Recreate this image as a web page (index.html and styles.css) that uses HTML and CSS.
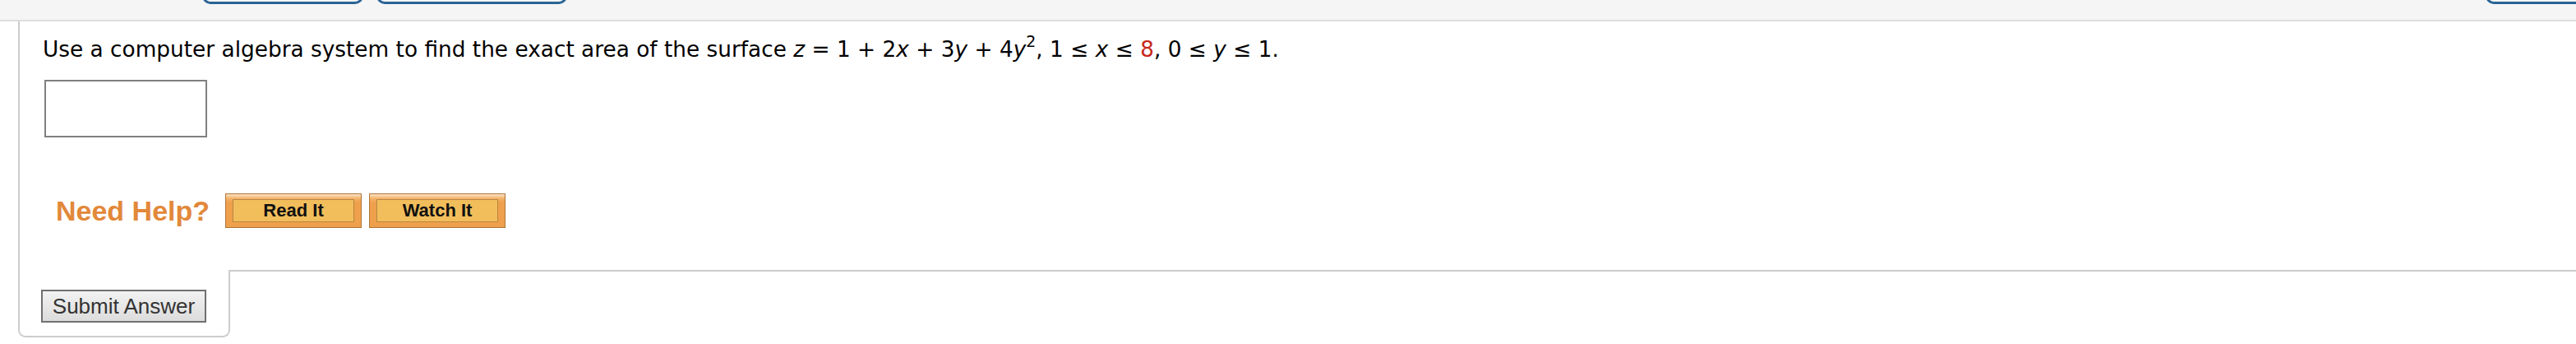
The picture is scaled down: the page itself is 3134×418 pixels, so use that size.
FILE: index.html
```html
<!DOCTYPE html>
<html lang="en">
<head>
<meta charset="utf-8">
<title>Question</title>
<link rel="stylesheet" href="styles.css">
</head>
<body>
<header class="topbar">
  <span class="tb-btn tb-btn-1"></span>
  <span class="tb-btn tb-btn-2"></span>
  <span class="tb-btn tb-btn-3"></span>
</header>
<div class="question">
  <p class="prompt">Use a computer algebra system to find the exact area of the surface <i>z</i> = 1 + 2<i>x</i> + 3<i>y</i> + 4<i>y</i><sup>2</sup>, 1 ≤ <i>x</i> ≤ <span class="red">8</span>, 0 ≤ <i>y</i> ≤ 1.</p>
  <div class="answer"><input class="answer-box" type="text" aria-label="answer"></div>
  <div class="help">
    <span class="need-help">Need Help?</span>
    <button class="help-btn" type="button"><span class="help-inner">Read It</span></button>
    <button class="help-btn" type="button"><span class="help-inner">Watch It</span></button>
  </div>
</div>
<div class="submit-tab">
  <button class="submit" type="button">Submit Answer</button>
</div>
</body>
</html>
```
FILE: styles.css
```css
html, body {
  margin: 0;
  padding: 0;
  background: #ffffff;
}

body {
  font-family: "DejaVu Sans", Verdana, sans-serif;
  color: #000;
}

.topbar {
  height: 24px;
  background: #f5f5f5;
  border-bottom: 2px solid #dddddd;
  display: flex;
  align-items: flex-start;
  overflow: hidden;
}

.tb-btn {
  display: block;
  box-sizing: border-box;
  height: 30px;
  margin-top: -25px;
  border: 3px solid #2a6496;
  border-radius: 10px;
  background: #f5f5f5;
}

.tb-btn-1 {
  margin-left: 246px;
  width: 196px;
}

.tb-btn-2 {
  margin-left: 16px;
  width: 232px;
}

.tb-btn-3 {
  margin-left: auto;
  width: 140px;
  margin-right: -30px;
}

.question {
  margin-left: 22px;
  border-left: 2px solid #cccccc;
  border-bottom: 2px solid #cccccc;
  padding: 16px 0 51px 28px;
}

.prompt {
  margin: 0;
  font-size: 26.35px;
  line-height: 36px;
  white-space: nowrap;
}

.prompt sup {
  font-size: 0.72em;
  line-height: 0;
  vertical-align: 0.62em;
}

.red {
  color: #c8281c;
}

.answer {
  margin-top: 19px;
  padding-left: 2px;
  height: 70px;
}

.answer-box {
  box-sizing: border-box;
  width: 198px;
  height: 70px;
  margin: 0;
  border: 2px solid #808080;
  background: #fff;
  display: block;
}

.help {
  margin-top: 68px;
  height: 42px;
  display: flex;
  align-items: center;
  padding-left: 16px;
}

.need-help {
  font-family: "Liberation Sans", Arial, sans-serif;
  font-weight: bold;
  font-size: 34px;
  color: #e2883a;
  margin-right: 19px;
}

.help-btn {
  box-sizing: border-box;
  width: 166px;
  height: 42px;
  margin: 0 9px 0 0;
  padding: 6px 8px 6px 8px;
  border: 1px solid #ad7438;
  background: linear-gradient(to bottom, #fbe4c8 0px, #f3b36c 5px, #efa04c 10px, #efa04c 100%);
  display: flex;
  cursor: pointer;
}

.help-inner {
  flex: 1;
  display: flex;
  align-items: center;
  justify-content: center;
  border: 1px solid #b9873f;
  background: #f2be5c;
  font-family: "Liberation Sans", Arial, sans-serif;
  font-weight: bold;
  font-size: 22px;
  color: #111;
}

.submit-tab {
  width: fit-content;
  margin-left: 22px;
  margin-top: -2px;
  background: #fff;
  border: 2px solid #cccccc;
  border-top: none;
  border-radius: 0 0 9px 9px;
  padding: 24px 27px 16px 26px;
}

.submit {
  display: block;
  box-sizing: border-box;
  width: 201px;
  height: 40px;
  margin: 0;
  padding: 0 10px;
  border: 2px solid #707070;
  background: linear-gradient(to bottom, #f2f2f2, #dcdcdc);
  font-family: "Liberation Sans", Arial, sans-serif;
  font-size: 26px;
  color: #333;
  text-align: center;
}
```
